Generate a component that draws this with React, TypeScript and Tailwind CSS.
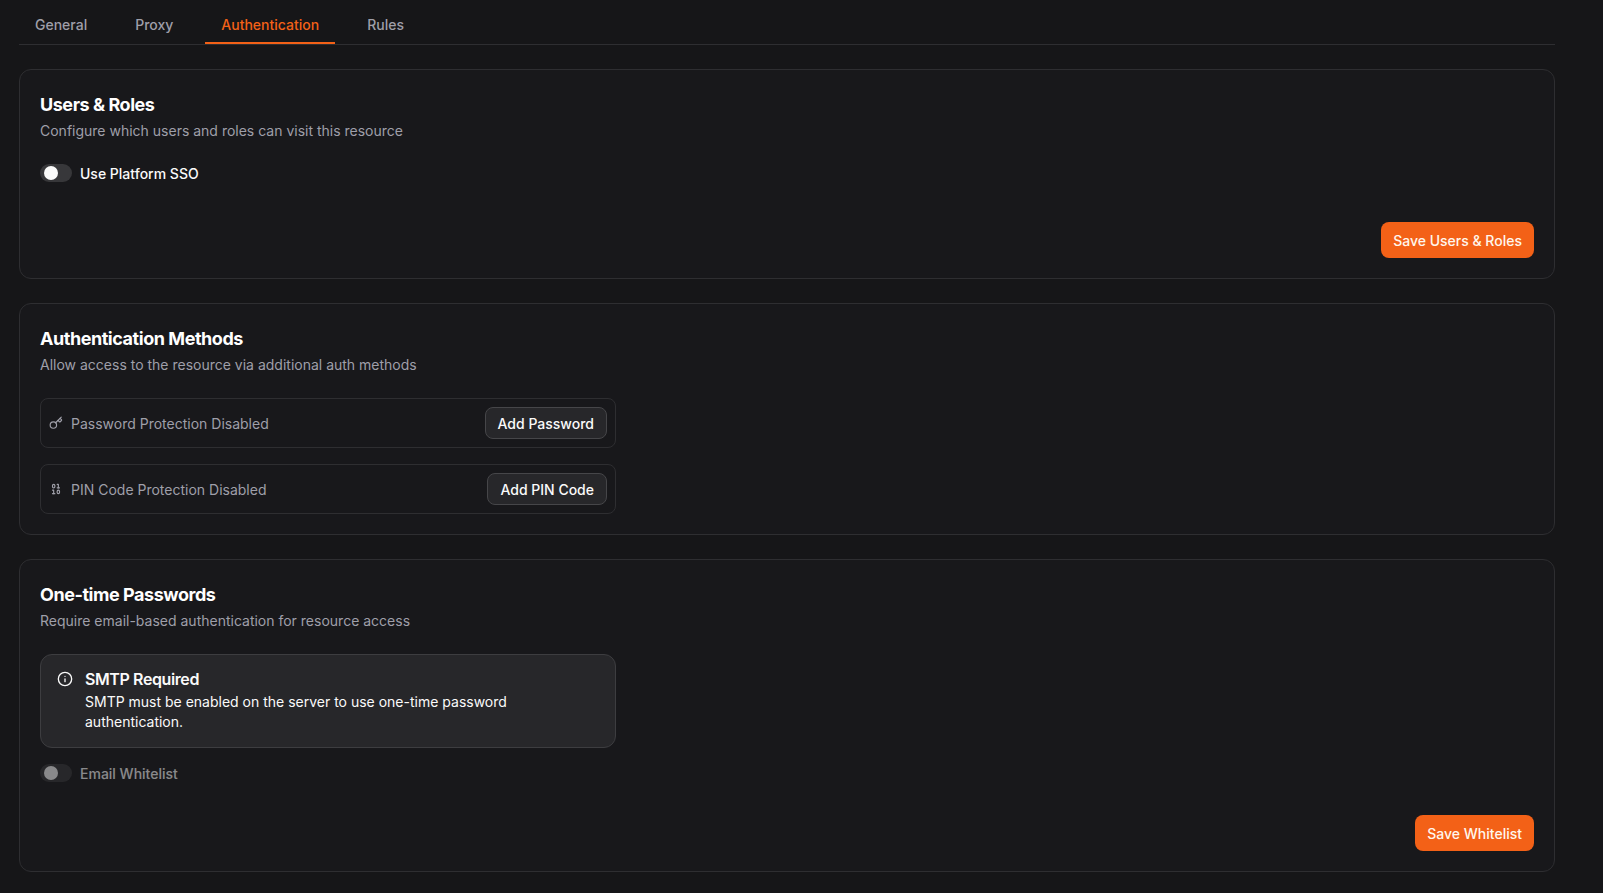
import type { ReactNode } from "react";
import { Binary, Info, Key } from "lucide-react";

const tabs = ["General", "Proxy", "Authentication", "Rules"];
const activeTab = "Authentication";

function Section({ title, description, children }: { title: string; description: string; children: ReactNode }) {
  return (
    <section className="rounded-xl border border-[#2e2e31] bg-[#18181b] px-5 pt-[21px] pb-5">
      <div className="space-y-0.5 pb-[23px]">
        <h2 className="text-lg leading-7 font-bold tracking-tight text-white">{title}</h2>
        <p className="text-sm text-[#9f9fa9]">{description}</p>
      </div>
      {children}
    </section>
  );
}

function SwitchField({ id, label, disabled = false }: { id: string; label: string; disabled?: boolean }) {
  return (
    <div className="flex h-[18px] items-center gap-2">
      <input
        id={id}
        type="checkbox"
        role="switch"
        disabled={disabled}
        className="peer h-[18px] w-8 appearance-none rounded-full bg-[#37373a] before:mt-0.5 before:ml-1 before:block before:size-3.5 before:rounded-full before:bg-neutral-50 before:content-[''] checked:bg-[#f36117] checked:before:ml-3.5 disabled:opacity-50"
      />
      <label htmlFor={id} className="pt-0.5 text-sm font-medium text-neutral-50 peer-disabled:opacity-50">
        {label}
      </label>
    </div>
  );
}

function SaveButton({ children }: { children: ReactNode }) {
  return (
    <button type="button" className="h-9 rounded-lg bg-[#f36117] px-3 pt-0.5 text-sm font-medium text-[#fff7ed]">
      {children}
    </button>
  );
}

function AuthMethodRow({ icon, label, action }: { icon: ReactNode; label: string; action: string }) {
  return (
    <div className="flex items-center justify-between rounded-lg border border-[#2e2e31] p-2">
      <div className="flex items-center gap-2 text-sm text-[#9f9fa9]">
        {icon}
        <span className="pt-0.5">{label}</span>
      </div>
      <button
        type="button"
        className="h-8 rounded-lg border border-[#464649] bg-[#27272a] px-3 pt-0.5 text-sm font-medium text-neutral-50"
      >
        {action}
      </button>
    </div>
  );
}

export default function App() {
  return (
    <main className="min-h-screen bg-[#161618] pt-[7px] pr-12 pb-5 pl-[19px] font-['Inter',sans-serif] text-neutral-50">
      <nav className="flex gap-4 border-b border-[#2e2e31]">
        {tabs.map((tab) => (
          <a
            key={tab}
            href={`#${tab.toLowerCase()}`}
            className={
              tab === activeTab
                ? "border-b-2 border-[#f36117] px-4 pt-2 pb-[7px] text-sm font-medium text-[#f36117]"
                : "border-b-2 border-transparent px-4 pt-2 pb-[7px] text-sm font-medium text-[#9f9fa9]"
            }
          >
            {tab}
          </a>
        ))}
      </nav>

      <div className="mt-6 space-y-6">
        <Section title="Users & Roles" description="Configure which users and roles can visit this resource">
          <SwitchField id="platform-sso" label="Use Platform SSO" />
          <div className="mt-10 flex justify-end">
            <SaveButton>Save Users &amp; Roles</SaveButton>
          </div>
        </Section>

        <Section
          title="Authentication Methods"
          description="Allow access to the resource via additional auth methods"
        >
          <div className="max-w-xl space-y-4">
            <AuthMethodRow
              icon={<Key className="size-3.5" />}
              label="Password Protection Disabled"
              action="Add Password"
            />
            <AuthMethodRow
              icon={<Binary className="size-3.5" />}
              label="PIN Code Protection Disabled"
              action="Add PIN Code"
            />
          </div>
        </Section>

        <Section title="One-time Passwords" description="Require email-based authentication for resource access">
          <div className="mb-4 flex max-w-xl gap-3 rounded-xl border border-[#3d3d40] bg-[#27272a] px-4 pt-4 pb-[15px]">
            <Info className="size-4 shrink-0" />
            <div>
              <h3 className="mb-1 text-base leading-[17px] font-semibold tracking-tight">SMTP Required</h3>
              <p className="text-sm">SMTP must be enabled on the server to use one-time password authentication.</p>
            </div>
          </div>
          <SwitchField id="email-whitelist" label="Email Whitelist" disabled />
          <div className="mt-[33px] flex justify-end">
            <SaveButton>Save Whitelist</SaveButton>
          </div>
        </Section>
      </div>
    </main>
  );
}
